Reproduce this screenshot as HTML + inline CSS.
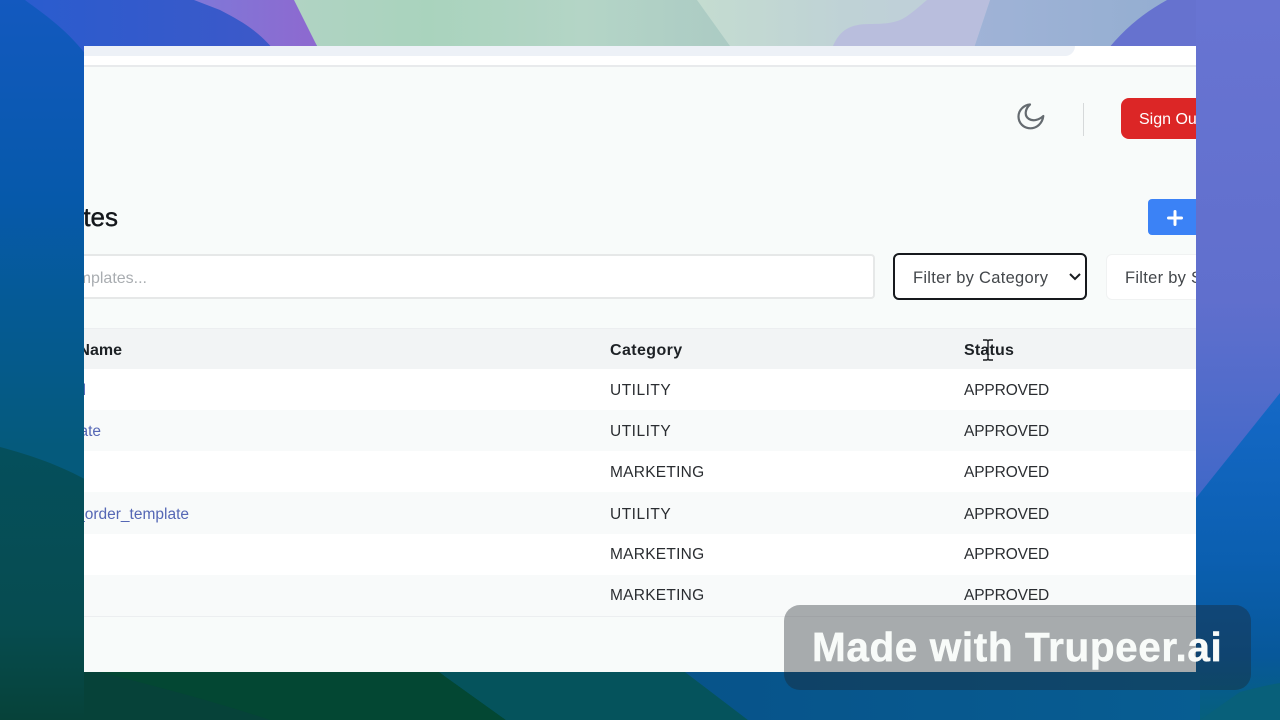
<!DOCTYPE html>
<html><head><meta charset="utf-8">
<style>
html,body{margin:0;padding:0;width:1280px;height:720px;overflow:hidden;background:#0b5aa8;font-family:"Liberation Sans",sans-serif}
.bg{position:absolute;left:0;top:0}
.win{position:absolute;left:84px;top:46px;width:1112px;height:626px;background:#f8fbfa;overflow:hidden}
.a{position:absolute;white-space:nowrap}
.topbar{left:0;top:0;width:1112px;height:19px;background:#fff;border-bottom:2px solid #e8eaec}
.urlbar{left:0;top:0;width:991px;height:10px;background:#edf1f7;border-radius:0 0 10px 0}
.thead{left:0;top:282px;width:1112px;height:41px;background:#f2f4f5;border-top:1px solid #eceef0;box-sizing:border-box}
.row{left:0;width:1112px;height:41px}
.w{background:#fff}.g{background:#f8fafa}
.t{font-size:15.5px;color:#2a2d31;line-height:18px}
.ap{letter-spacing:-.13px}.ut{letter-spacing:.5px}.mk{letter-spacing:.25px}
.h{font-size:16px;font-weight:bold;color:#1d2125;line-height:18px}
.l{font-size:15.5px;color:#5567b5;line-height:18px}
.wm{left:784px;top:605px;width:467px;height:85px;border-radius:16px;background:rgba(30,35,40,.37);position:absolute}
.wmt{position:absolute;left:812px;top:625px;font-size:40.5px;font-weight:bold;color:#f8fbf9;line-height:44px;white-space:nowrap;letter-spacing:.6px;-webkit-text-stroke:.5px #f8fbf9}
</style></head><body>
<svg class="bg" width="1280" height="720" viewBox="0 0 1280 720">
<defs>
<linearGradient id="m" gradientUnits="userSpaceOnUse" x1="0" y1="0" x2="0" y2="720"><stop offset="0" stop-color="#1359bf"/><stop offset=".28" stop-color="#0659aa"/><stop offset=".42" stop-color="#055a96"/><stop offset=".62" stop-color="#055a7c"/><stop offset="1" stop-color="#055a7c"/></linearGradient>
<linearGradient id="b2" x1="0" y1="0" x2="1" y2="0"><stop offset="0" stop-color="#2a5cce"/><stop offset="1" stop-color="#3f58c8"/></linearGradient>
<linearGradient id="p" x1="0" y1="0" x2="1" y2="0"><stop offset="0" stop-color="#7f78d8"/><stop offset="1" stop-color="#8e68cf"/></linearGradient>
<linearGradient id="gr" x1="0" y1="0" x2="1" y2="0"><stop offset="0" stop-color="#b0d3c3"/><stop offset=".3" stop-color="#a9d3bd"/><stop offset=".65" stop-color="#b4d5c6"/><stop offset="1" stop-color="#abcac4"/></linearGradient>
<linearGradient id="gr2" x1="0" y1="0" x2="1" y2="0"><stop offset="0" stop-color="#c4dcd0"/><stop offset=".5" stop-color="#bfd2d6"/><stop offset="1" stop-color="#bfcddb"/></linearGradient>
<linearGradient id="bl" x1="0" y1="0" x2="1" y2="0"><stop offset="0" stop-color="#a0b3d7"/><stop offset="1" stop-color="#94aed1"/></linearGradient>
<linearGradient id="rp" x1="0" y1="0" x2="0" y2="1"><stop offset="0" stop-color="#6874d2"/><stop offset=".6" stop-color="#606fcd"/><stop offset="1" stop-color="#4068c8"/></linearGradient>
<linearGradient id="rb" gradientUnits="userSpaceOnUse" x1="0" y1="400" x2="0" y2="720"><stop offset="0" stop-color="#1468c6"/><stop offset=".5" stop-color="#0b5fb0"/><stop offset=".8" stop-color="#07589a"/><stop offset="1" stop-color="#06607c"/></linearGradient>
<linearGradient id="tl" gradientUnits="userSpaceOnUse" x1="0" y1="447" x2="0" y2="720"><stop offset="0" stop-color="#054f5c"/><stop offset=".65" stop-color="#064c50"/><stop offset="1" stop-color="#064239"/></linearGradient>
<linearGradient id="bb" x1="0" y1="0" x2="1" y2="0"><stop offset="0" stop-color="#07538a"/><stop offset="1" stop-color="#075d92"/></linearGradient>
</defs>
<rect width="1280" height="720" fill="url(#m)"/>
<path d="M25 0C45 15 68 30 90 60H300V0Z" fill="url(#b2)"/>
<path d="M194 0H300L322 60H282C262 33 245 23 220 10Z" fill="url(#p)"/>
<path d="M294 0H700L740 60H324Z" fill="url(#gr)"/>
<path d="M697 0H995V60H740Z" fill="url(#gr2)"/>
<path d="M820 60L833 46C840 30 850 24 870 24C890 24 900 22 910 14C918 8 922 4 927 0H990L970 60Z" fill="#b9bedd"/>
<path d="M990 0H1170V60H970Z" fill="url(#bl)"/>
<path d="M1167 0H1280V400H1100V60C1118 34 1140 15 1167 0Z" fill="#6672cf"/>
<rect x="1196" y="0" width="84" height="500" fill="url(#rp)"/>
<path d="M1280 393L1196 498V720H1280Z" fill="url(#rb)"/>
<path d="M1240 692C1255 688 1268 685 1280 683V720H1200Z" fill="#08607a"/>
<path d="M0 447C30 455 60 465 90 482V720H0Z" fill="url(#tl)"/>
<rect x="84" y="672" width="360" height="48" fill="#064239"/>
<path d="M100 672H439L506 720H270C210 700 150 685 100 672Z" fill="#034733"/>
<path d="M439 672H685L748 720H506Z" fill="#05535c"/>
<path d="M685 672H1200V720H748Z" fill="url(#bb)"/>
</svg>
<div class="win">
  <div class="a topbar"></div>
  <div class="a urlbar"></div>
  <svg class="a" style="left:930px;top:55px" width="34" height="34" viewBox="0 0 34 34"><path d="M16 3.5C11 8 10 15 15 18C19 20.5 25 19 29.3 15C28.5 22 23 27.3 16.5 27.3C9.5 27.3 4.5 22 4.5 15.5C4.5 9 10 4 16 3.5Z" fill="none" stroke="#656b70" stroke-width="2.2" stroke-linejoin="round"/></svg>
  <div class="a" style="left:999px;top:57px;width:1px;height:33px;background:#d6d9da"></div>
  <div class="a" style="left:1037px;top:52px;width:90px;height:41px;background:#dc2626;border-radius:8px"></div>
  <div class="a" style="left:1055px;top:64px;font-size:16px;color:#fff;line-height:19px">Sign Out</div>
  <div class="a" style="right:1078px;top:155px;font-size:26px;color:#15181c;line-height:32px;-webkit-text-stroke:.4px #15181c">Templates</div>
  <div class="a" style="left:1064px;top:153px;width:70px;height:36px;background:#3b82f6;border-radius:4px"></div>
  <svg class="a" style="left:1082px;top:163px" width="18" height="18"><path d="M9 2.5V15.5M2.5 9H15.5" stroke="#fff" stroke-width="3" stroke-linecap="round"/></svg>
  <div class="a" style="left:-100px;top:208px;width:887px;height:41px;background:#fff;border:2px solid #e6e8e8;border-radius:4px"></div>
  <div class="a" style="right:1049px;top:223px;font-size:16px;color:#a9adb1;line-height:19px">Search templates...</div>
  <div class="a" style="left:809px;top:207px;width:194px;height:47px;background:#fff;border:2px solid #16191d;border-radius:6px;box-sizing:border-box"></div>
  <div class="a" style="left:829px;top:223px;font-size:16.5px;color:#43474b;line-height:19px;letter-spacing:.28px">Filter by Category</div>
  <svg class="a" style="left:985px;top:226px" width="12" height="10"><path d="M1 2L6 7L11 2" fill="none" stroke="#1a1d20" stroke-width="2"/></svg>
  <div class="a" style="left:1022px;top:208px;width:120px;height:46px;background:#fff;border:1px solid #f0f2f2;border-radius:6px;box-sizing:border-box"></div>
  <div class="a" style="left:1041px;top:223px;width:71px;overflow:hidden;font-size:16.5px;color:#43474b;line-height:19px;letter-spacing:.28px">Filter by Status</div>

  <div class="a thead"></div>
  <div class="a row w" style="top:323px"></div>
  <div class="a row g" style="top:364px"></div>
  <div class="a row w" style="top:405px"></div>
  <div class="a row g" style="top:447px"></div>
  <div class="a row w" style="top:488px"></div>
  <div class="a row g" style="top:529px;border-bottom:1px solid #eceef0"></div>

  <div class="a h" style="right:1074px;top:296px">Template Name</div>
  <div class="a h" style="left:526px;top:296px;letter-spacing:.4px">Category</div>
  <div class="a h" style="left:880px;top:296px;letter-spacing:.2px">Status</div>

  <div class="a l" style="right:1110px;top:336px">hello_world</div>
  <div class="a l" style="right:1095px;top:377px">my_template</div>
  <div class="a l" style="right:1007px;top:460px">purchase_order_template</div>

  <div class="a t ut" style="left:526px;top:336px">UTILITY</div>
  <div class="a t ut" style="left:526px;top:377px">UTILITY</div>
  <div class="a t mk" style="left:526px;top:418px">MARKETING</div>
  <div class="a t ut" style="left:526px;top:460px">UTILITY</div>
  <div class="a t mk" style="left:526px;top:500px">MARKETING</div>
  <div class="a t mk" style="left:526px;top:541px">MARKETING</div>

  <div class="a t ap" style="left:880px;top:336px">APPROVED</div>
  <div class="a t ap" style="left:880px;top:377px">APPROVED</div>
  <div class="a t ap" style="left:880px;top:418px">APPROVED</div>
  <div class="a t ap" style="left:880px;top:460px">APPROVED</div>
  <div class="a t ap" style="left:880px;top:500px">APPROVED</div>
  <div class="a t ap" style="left:880px;top:541px">APPROVED</div>

  <svg class="a" style="left:896px;top:292px" width="16" height="24"><path d="M3 2H7L8 3L9 2H13M8 3V21M3 22H7L8 21L9 22H13" fill="none" stroke="#1a1d20" stroke-width="1.4"/></svg>
</div>
<div class="wm"></div>
<div class="wmt">Made with Trupeer.ai</div>
</body></html>
